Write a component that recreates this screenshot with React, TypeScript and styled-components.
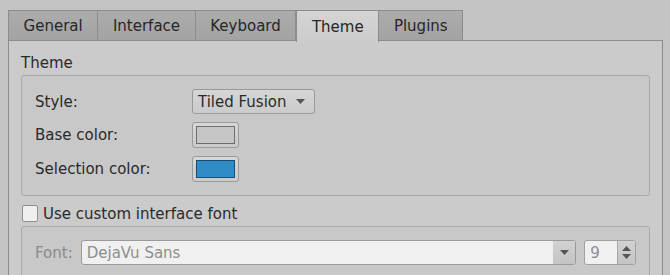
import { createGlobalStyle } from 'styled-components';
import styled from 'styled-components';

const GlobalStyle = createGlobalStyle`
  html, body {
    margin: 0;
    padding: 0;
    background: #c4c4c4;
    overflow: hidden;
  }
  body {
    font-family: 'DejaVu Sans', 'Liberation Sans', sans-serif;
    font-size: 15px;
    color: #2a2a2a;
  }
`;

const tabs = ['General', 'Interface', 'Keyboard', 'Theme', 'Plugins'];

function Arrow({ up = false }: { up?: boolean }) {
  return (
    <svg width="9" height="5" viewBox="0 0 9 5">
      <path d={up ? 'M0 5 L4.5 0 L9 5 Z' : 'M0 0 L9 0 L4.5 5 Z'} fill="#555" />
    </svg>
  );
}

export default function App() {
  return (
    <Page>
      <GlobalStyle />
      <TabBar>
        {tabs.map(t => (
          <Tab key={t} $active={t === 'Theme'}>
            {t}
          </Tab>
        ))}
      </TabBar>
      <Panel>
        <GroupTitle>Theme</GroupTitle>
        <GroupBox>
          <FormGrid>
            <Label>Style:</Label>
            <Combo>
              Tiled Fusion
              <Arrow />
            </Combo>
            <Label>Base color:</Label>
            <ColorButton>
              <Swatch $color="#c6c6c6" $edge="#6e6e6e" />
            </ColorButton>
            <Label>Selection color:</Label>
            <ColorButton>
              <Swatch $color="#308cc6" $edge="#1a4d70" />
            </ColorButton>
          </FormGrid>
        </GroupBox>
        <CheckRow>
          <CheckBox />
          Use custom interface font
        </CheckRow>
        <FontBox>
          <FontRow>
            <Label $disabled>Font:</Label>
            <FontCombo>
              <span>DejaVu Sans</span>
              <DropButton>
                <Arrow />
              </DropButton>
            </FontCombo>
            <SpinBox>
              <SpinValue>9</SpinValue>
              <SpinButtons>
                <Arrow up />
                <Arrow />
              </SpinButtons>
            </SpinBox>
          </FontRow>
        </FontBox>
      </Panel>
    </Page>
  );
}

const Page = styled.div`
  padding: 10px 8px 0 8px;
  height: 275px;
  box-sizing: border-box;
  display: flex;
  flex-direction: column;
  overflow: hidden;
`;

const TabBar = styled.div`
  display: flex;
  height: 31px;
  flex-shrink: 0;
  position: relative;
  z-index: 1;
`;

const Tab = styled.div<{ $active?: boolean }>`
  box-sizing: border-box;
  height: ${({ $active }) => ($active ? '32px' : '31px')};
  padding: 1px 14.6px 0 14.6px;
  display: flex;
  align-items: center;
  border: 1px solid #8c8c8c;
  border-left-width: ${({ $active }) => ($active ? '1px' : '0')};
  border-bottom: ${({ $active }) => ($active ? 'none' : '1px solid #8c8c8c')};
  background: ${({ $active }) =>
    $active
      ? 'linear-gradient(#d4d4d4, #cccccc)'
      : 'linear-gradient(#acacac, #a3a3a3)'};
  color: #262626;

  &:first-child {
    border-left-width: 1px;
  }
`;

const Panel = styled.div`
  box-sizing: border-box;
  width: 655px;
  flex: 1;
  min-height: 0;
  overflow: hidden;
  border: 1px solid #8c8c8c;
  border-bottom: none;
  margin-top: -1px;
  background: #cbcbcb;
  padding: 12px 12px 0 12px;
`;

const GroupTitle = styled.div`
  height: 22px;
  line-height: 20px;
`;

const GroupBox = styled.div`
  border: 1px solid #a9a9a9;
  border-radius: 3px;
  background: #c8c8c8;
  padding: 13px 14px 13px 13px;
`;

const FormGrid = styled.div`
  display: grid;
  grid-template-columns: 157px auto;
  justify-items: start;
  align-items: center;
  row-gap: 8px;
`;

const Label = styled.div<{ $disabled?: boolean }>`
  color: ${({ $disabled }) => ($disabled ? '#8a8a8a' : '#2a2a2a')};
`;

const Combo = styled.div`
  box-sizing: border-box;
  height: 25px;
  width: 123px;
  display: flex;
  align-items: center;
  justify-content: space-between;
  padding: 0 9px 0 5px;
  border: 1px solid #9a9a9a;
  border-radius: 3px;
  background: linear-gradient(#d6d6d6, #cbcbcb);
`;

const ColorButton = styled.div`
  box-sizing: border-box;
  width: 47px;
  height: 26px;
  padding: 3px;
  border: 1px solid #9a9a9a;
  border-radius: 3px;
  background: linear-gradient(#d6d6d6, #cbcbcb);
`;

const Swatch = styled.div<{ $color: string; $edge: string }>`
  box-sizing: border-box;
  width: 100%;
  height: 100%;
  border: 1px solid ${({ $edge }) => $edge};
  background: ${({ $color }) => $color};
`;

const CheckRow = styled.div`
  display: flex;
  align-items: center;
  gap: 5px;
  height: 19px;
  margin: 8px 0 3px 1px;
`;

const CheckBox = styled.div`
  box-sizing: border-box;
  width: 16px;
  height: 17px;
  border: 1px solid #8e8e8e;
  border-radius: 2px;
  background: #efefef;
`;

const FontBox = styled.div`
  border: 1px solid #a9a9a9;
  border-radius: 3px;
  background: #c8c8c8;
  padding: 13px 13px 20px 13px;
`;

const FontRow = styled.div`
  display: flex;
  align-items: center;
`;

const FontCombo = styled.div`
  box-sizing: border-box;
  height: 25px;
  width: 497px;
  margin-left: 8px;
  display: flex;
  align-items: center;
  justify-content: space-between;
  padding-left: 5px;
  border: 1px solid #9a9a9a;
  border-radius: 3px;
  background: #f0f0f0;
  color: #8e8e8e;
  overflow: hidden;
`;

const DropButton = styled.div`
  width: 22px;
  height: 100%;
  display: flex;
  align-items: center;
  justify-content: center;
  background: linear-gradient(#d2d2d2, #c4c4c4);
`;

const SpinBox = styled.div`
  box-sizing: border-box;
  height: 25px;
  width: 52px;
  margin-left: 8px;
  display: flex;
  border: 1px solid #a0a0a0;
  border-radius: 3px;
  background: #f0f0f0;
  overflow: hidden;
`;

const SpinValue = styled.div`
  flex: 1;
  display: flex;
  align-items: center;
  padding-left: 5px;
  color: #8e8e8e;
`;

const SpinButtons = styled.div`
  width: 17px;
  display: flex;
  flex-direction: column;
  align-items: center;
  justify-content: center;
  gap: 3px;
  border-left: 1px solid #a8a8a8;
  background: linear-gradient(#d2d2d2, #c4c4c4);
`;
